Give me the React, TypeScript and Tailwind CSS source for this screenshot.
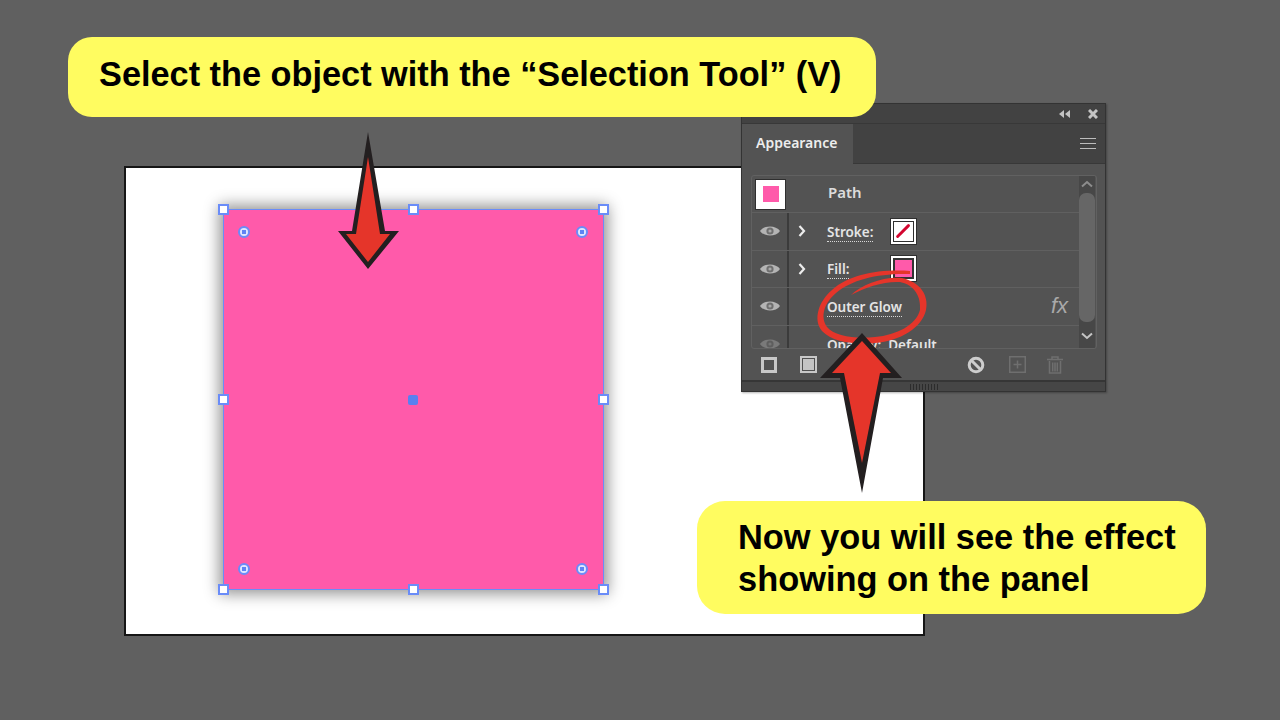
const handles = [
  [223, 209],
  [413, 209],
  [603, 209],
  [223, 399],
  [603, 399],
  [223, 589],
  [413, 589],
  [603, 589],
];

const widgets = [
  [244, 232],
  [582, 232],
  [244, 569],
  [582, 569],
];

function Eye({ dim }: { dim?: boolean }) {
  return (
    <svg width="20" height="12" viewBox="0 0 20 12" className={`-mt-[1px] ${dim ? "opacity-40" : ""}`}>
      <path d="M0 6 C4 0 16 0 20 6 C16 12 4 12 0 6 Z" fill="#b4b4b4" />
      <circle cx="10" cy="6" r="3.6" fill="#6f6f6f" />
      <circle cx="10" cy="6" r="1.6" fill="#a8a8a8" />
    </svg>
  );
}

function Chevron() {
  return (
    <svg width="8" height="12" viewBox="0 0 8 12" className="-mt-[1px]">
      <path d="M1.5 1 L6 6 L1.5 11" fill="none" stroke="#ececec" strokeWidth="2.2" />
    </svg>
  );
}

function Row({ label, chevron, dotted = true, swatch, fx, dim, short }: {
  label: string;
  chevron?: boolean;
  dotted?: boolean;
  swatch?: React.ReactNode;
  fx?: boolean;
  dim?: boolean;
  short?: boolean;
}) {
  return (
    <div className={`flex shrink-0 items-center border-b border-[#606060] ${short ? "h-[37px]" : "h-[38px]"}`}>
      <div className="flex h-full w-[37px] shrink-0 items-center justify-center border-r-2 border-[#3b3b3b]">
        <Eye dim={dim} />
      </div>
      <div className="flex w-[38px] shrink-0 items-center justify-center pr-[12px]">
        {chevron && <Chevron />}
      </div>
      <div className={`-mt-[2px] ${swatch ? "w-[64px] shrink-0" : "shrink-0"}`}>
        <span className={`text-[13.5px] leading-[16px] font-semibold whitespace-pre text-[#e4e4e4] ${dotted ? "border-b border-dotted border-[#d8d8d8]" : ""}`}>
          {label}
        </span>
      </div>
      {swatch}
      {fx && (
        <span className="mt-[-1px] ml-auto pr-[11px] font-['Liberation_Sans',sans-serif] text-[22px] leading-none italic text-[#a9a9a9]">
          fx
        </span>
      )}
    </div>
  );
}

function Panel() {
  return (
    <div className="absolute top-[103px] left-[741px] flex h-[289px] w-[365px] flex-col border border-[#333333] bg-[#535353] font-['Noto_Sans',sans-serif] shadow-[1px_1px_2px_rgba(0,0,0,0.3)]">
      {/* title bar */}
      <div className="flex h-[19px] shrink-0 items-center justify-end gap-[17px] bg-[#424242] pr-[7px]">
        <svg width="12" height="8" viewBox="0 0 12 8">
          <path d="M5 0 L0 4 L5 8 Z M11 0 L6 4 L11 8 Z" fill="#c4c4c4" />
        </svg>
        <svg width="10" height="10" viewBox="0 0 10 10">
          <path d="M1 1 L9 9 M9 1 L1 9" stroke="#c4c4c4" strokeWidth="3" />
        </svg>
      </div>
      {/* tabs */}
      <div className="flex h-[41px] shrink-0 bg-[#424242]">
        <div className="flex w-[111px] items-center border-t border-[#383838] bg-[#535353] pb-[3px] pl-[14px] text-[14px] font-semibold text-[#ededed]">
          Appearance
        </div>
        <div className="flex flex-1 flex-col justify-center gap-[3.5px] border-t border-b border-[#383838] pr-[9px]">
          <div className="ml-auto h-[1.5px] w-[16px] bg-[#bdbdbd]" />
          <div className="ml-auto h-[1.5px] w-[16px] bg-[#bdbdbd]" />
          <div className="ml-auto h-[1.5px] w-[16px] bg-[#bdbdbd]" />
        </div>
      </div>
      {/* list */}
      <div className="mt-[11px] mr-[8px] ml-[9px] flex h-[174px] shrink-0 overflow-hidden rounded-[3px] border border-[#616161]">
        <div className="flex min-w-0 flex-1 flex-col">
          <div className="flex h-[37px] shrink-0 items-center border-b border-[#606060] pl-[3px]">
            <div className="flex size-[31px] items-center justify-center border border-[#2f2f2f] bg-white">
              <div className="size-[16px] bg-[#ff5aaa] blur-[0.5px]" />
            </div>
            <span className="-mt-[3px] ml-[42px] text-[15px] font-semibold text-[#dcdcdc]">Path</span>
          </div>
          <Row
            label="Stroke:"
            chevron
            swatch={
              <div className="-mt-[1px] flex size-[25px] items-center justify-center border-2 border-white bg-white outline outline-[#2f2f2f]">
                <svg width="21" height="21" viewBox="0 0 21 21" className="border border-[#2f2f2f]">
                  <path d="M4 16 L16 4" stroke="#d3052f" strokeWidth="3.2" strokeLinecap="round" />
                </svg>
              </div>
            }
          />
          <Row
            label="Fill:"
            chevron
            short
            swatch={
              <div className="-mt-[1px] flex size-[25px] items-center justify-center border-2 border-white bg-[#333333] outline outline-[#2f2f2f]">
                <div className="size-[17px] bg-[#ff5aaa]" />
              </div>
            }
          />
          <Row label="Outer Glow" fx />
          <Row label={"Opacity:\u00A0\u00A0Default"} dotted={false} dim />
        </div>
        {/* scrollbar */}
        <div className="mr-[1px] flex w-[16px] shrink-0 flex-col items-center bg-[#474747]">
          <svg width="12" height="8" viewBox="0 0 12 8" className="mt-[4px] shrink-0">
            <path d="M1 6.5 L6 2 L11 6.5" fill="none" stroke="#8c8c8c" strokeWidth="2" />
          </svg>
          <div className="mt-[5px] h-[129px] w-[16px] shrink-0 rounded-[7px] bg-[#666666]" />
          <svg width="12" height="8" viewBox="0 0 12 8" className="mt-[10px] shrink-0">
            <path d="M1 1.5 L6 6 L11 1.5" fill="none" stroke="#c4c4c4" strokeWidth="2" />
          </svg>
        </div>
      </div>
      {/* footer icons */}
      <div className="flex h-[31px] shrink-0 items-center pl-[19px]">
        <div className="size-[16px] border-[3px] border-[#c8c8c8]" />
        <div className="ml-[23px] flex size-[17px] items-center justify-center border-2 border-[#c8c8c8] bg-[#505050]">
          <div className="size-[11px] bg-[#c4c4c4]" />
        </div>
        <svg width="18" height="18" viewBox="0 0 18 18" className="ml-[150px]">
          <circle cx="9" cy="9" r="6.8" fill="none" stroke="#cdcdcd" strokeWidth="3" />
          <path d="M4.5 4.5 L13.5 13.5" stroke="#cdcdcd" strokeWidth="3" />
        </svg>
        <svg width="17" height="17" viewBox="0 0 17 17" className="ml-[24px]">
          <rect x="0.75" y="0.75" width="15.5" height="15.5" fill="none" stroke="#6f6f6f" strokeWidth="1.5" />
          <path d="M8.5 4.5 V12.5 M4.5 8.5 H12.5" stroke="#6f6f6f" strokeWidth="1.5" />
        </svg>
        <svg width="16" height="18" viewBox="0 0 16 18" className="ml-[21px]">
          <path d="M0 3.5 H16 M5 3 V1 H11 V3" fill="none" stroke="#6f6f6f" strokeWidth="1.5" />
          <path d="M2.5 5 V17 H13.5 V5 M5.7 6.5 V15.5 M8 6.5 V15.5 M10.3 6.5 V15.5" fill="none" stroke="#6f6f6f" strokeWidth="1.5" />
        </svg>
      </div>
      {/* resize bar */}
      <div className="flex flex-1 items-center justify-center border-t-2 border-[#363636] bg-[#464646] pl-[2px]">
        <div className="h-[6px] w-[30px] bg-[repeating-linear-gradient(90deg,#2c2c2c_0,#2c2c2c_1px,transparent_1px,transparent_3px)]" />
      </div>
    </div>
  );
}

export default function App() {
  return (
    <div className="relative h-[720px] w-[1280px] overflow-hidden bg-[#606060] font-['Liberation_Sans',Arial,sans-serif]">
      {/* artboard */}
      <div className="absolute top-[166px] left-[124px] h-[470px] w-[801px] border-2 border-[#161616] bg-white" />

      {/* selected shape */}
      <div className="absolute top-[209px] left-[223px] size-[381px] border border-[#6a8cf8] bg-[#ff5aaa] shadow-[0_0_14px_4px_rgba(0,0,0,0.42)]" />
      {handles.map(([x, y]) => (
        <div
          key={`${x}-${y}`}
          className="absolute size-[11px] border-2 border-[#6a8cf8] bg-white"
          style={{ left: x - 5, top: y - 5 }}
        />
      ))}
      {widgets.map(([x, y]) => (
        <div
          key={`${x}-${y}`}
          className="absolute flex size-[12px] items-center justify-center rounded-full border-2 border-[#6a8cf8] bg-[#dfe6ff] blur-[0.3px]"
          style={{ left: x - 6, top: y - 6 }}
        >
          <div className="size-[4px] bg-[#5f84f4]" />
        </div>
      ))}
      <div className="absolute top-[395px] left-[408px] size-[10px] rounded-[2px] bg-[#5a80f0]" />

      <Panel />

      {/* callouts */}
      <div className="absolute top-[37px] left-[68px] flex h-[80px] w-[808px] items-center rounded-[24px] bg-[#fffc60] pb-[4px] pl-[31px] text-[34.3px] font-bold text-black">
        Select the object with the “Selection Tool” (V)
      </div>
      <div className="absolute top-[501px] left-[697px] flex h-[113px] w-[509px] flex-col justify-center rounded-[28px] bg-[#fffc60] pl-[41px] text-[34.4px] leading-[42px] font-bold text-black">
        <span>Now you will see the effect</span>
        <span>showing on the panel</span>
      </div>

      {/* annotations */}
      <svg width="1280" height="720" viewBox="0 0 1280 720" className="absolute top-0 left-0">
        <path
          d="M910 271 C880 269 850 274 832 290 C818 302 813 320 822 331 C832 342 855 345 875 343 C900 341 922 328 926 310 C929 295 920 282 902 278 C885 276 862 284 851 295 C865 287 885 281 900 282 C915 285 921 297 920 310 C916 325 897 335 875 337 C855 339 834 336 827 327 C820 317 824 303 836 293 C852 279 880 273 910 274 Z"
          fill="#e5352a"
        />
        <polygon points="368,132 385,231 399,231 368,269 338,231 352,231" fill="#231f20" />
        <polygon points="368,157 380,234 390,234 368,262 346,234 356,234" fill="#e5352a" />
        <polygon points="862,333 902,378 883,378 862,493 840,378 820,378" fill="#231f20" />
        <polygon points="862,341 891,373 880,373 862,463 844,373 832,373" fill="#e5352a" />
      </svg>
    </div>
  );
}
